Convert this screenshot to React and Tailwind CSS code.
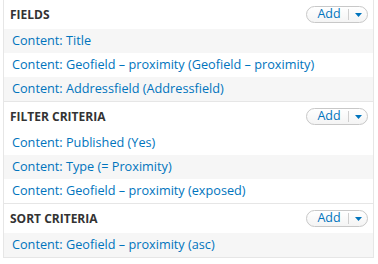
import React from 'react';

const sections = [
  {
    title: 'Fields',
    rows: [
      { label: 'Content: Title', shaded: true },
      { label: 'Content: Geofield – proximity (Geofield – proximity)', shaded: false },
      { label: 'Content: Addressfield (Addressfield)', shaded: true },
    ],
  },
  {
    title: 'Filter criteria',
    rows: [
      { label: 'Content: Published (Yes)', shaded: false },
      { label: 'Content: Type (= Proximity)', shaded: true },
      { label: 'Content: Geofield – proximity (exposed)', shaded: false },
    ],
  },
  {
    title: 'Sort criteria',
    rows: [{ label: 'Content: Geofield – proximity (asc)', shaded: true }],
  },
];

function AddButton() {
  return (
    <div className="flex items-center h-[17px] w-[62px] rounded-full border border-[#c8c8c8] bg-gradient-to-b from-white to-[#f4f4f4]">
      <span className="flex-1 text-center text-[12.5px] leading-none text-[#0074bd] pl-[3px]">Add</span>
      <span className="h-[11px] w-px bg-[#cfcfcf]" />
      <span className="w-[18px] flex items-center justify-center">
        <svg width="7" height="4" viewBox="0 0 7 4">
          <polygon points="0,0 7,0 3.5,4" fill="#0074bd" />
        </svg>
      </span>
    </div>
  );
}

export default function App() {
  return (
    <div className="w-[378px] h-[264px] bg-white" style={{ fontFamily: '"Open Sans", "Noto Sans", sans-serif' }}>
      <div className="ml-[3px] w-[371px] border-x border-b border-[#e6e6e6]">
        {sections.map((section, i) => (
          <div key={section.title} className={i > 0 ? 'border-t border-[#e6e6e6]' : ''}>
            <div className="flex items-center justify-between h-[29px] pl-[6px] pr-[5px]">
              <h3 className="text-[12px] font-bold uppercase text-[#333]">{section.title}</h3>
              <AddButton />
            </div>
            {section.rows.map((row) => (
              <div
                key={row.label}
                className={`flex items-center h-[24px] pl-[8px] ${row.shaded ? 'bg-[#f6f6f6]' : 'bg-white'}`}
              >
                <a href="#" className="text-[12.7px] text-[#0074bd]">{row.label}</a>
              </div>
            ))}
          </div>
        ))}
      </div>
    </div>
  );
}
